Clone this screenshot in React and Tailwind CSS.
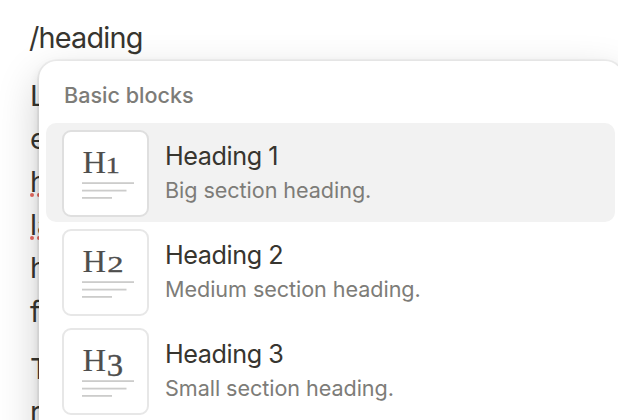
const lines = [
  { text: "L" },
  { text: "e" },
  { text: "h", misspelled: true },
  { text: "la", misspelled: true },
  { text: "h" },
  { text: "f" },
];

const blocks = [
  { level: "1", title: "Heading 1", description: "Big section heading." },
  { level: "2", title: "Heading 2", description: "Medium section heading." },
  { level: "3", title: "Heading 3", description: "Small section heading." },
];

// Old-style digits: 1 and 2 sit at x-height, 3 drops below the baseline
const digitTransforms = {
  1: "translate(41.6 41.2) scale(1.2 1)",
  2: "translate(43.3 41.2) scale(1.36 1)",
  3: "translate(42.8 46) scale(1.36 1.32)",
};

const HeadingIcon = ({ level }) => (
  <svg width="83" height="83" viewBox="0 0 83 83" aria-hidden="true">
    <g
      fill="#454544"
      stroke="#454544"
      className="font-['Liberation_Serif',serif] opacity-95"
    >
      <text
        transform="translate(18.4 41.2) scale(1.02 1)"
        fontSize="32"
        strokeWidth="0.1"
      >
        H
      </text>
      <text
        transform={digitTransforms[level]}
        fontSize="24"
        strokeWidth="0.3"
      >
        {level}
      </text>
    </g>
    <g fill="#cccccb">
      <rect x="18" y="50.2" width="52" height="1.8" />
      <rect x="18" y="57.7" width="44.5" height="1.8" />
      <rect x="18" y="65" width="30" height="1.8" />
    </g>
  </svg>
);

const BlockItem = ({ block, active }) => (
  <div
    className={`flex h-[99px] items-center rounded-[10px] pt-px pl-4 ${
      active ? "bg-[#f2f2f2]" : ""
    }`}
  >
    <div
      className={`flex size-[87px] shrink-0 items-center justify-center rounded-[9px] border-2 bg-white ${
        active ? "border-[#dfdfdf]" : "border-[#e7e7e7]"
      }`}
    >
      <HeadingIcon level={block.level} />
    </div>
    <div className="ml-4 whitespace-nowrap">
      <div className="text-[25.2px] leading-[34px] tracking-[-0.42px] text-[#37352f]">
        {block.title}
      </div>
      <div className="text-[21.6px] leading-[34px] tracking-[-0.06px] text-[#7d7c78]">
        {block.description}
      </div>
    </div>
  </div>
);

const Line = ({ text, misspelled }) => (
  <div className="relative h-[43.2px]">
    {text}
    {misspelled && (
      <div className="absolute top-[33px] left-0 flex gap-[2.6px]">
        <span className="size-1 rounded-full bg-[#e8685f]" />
        <span className="size-1 rounded-full bg-[#e8685f]" />
      </div>
    )}
  </div>
);

export default function App() {
  return (
    <div className="relative h-[420px] w-[618px] overflow-hidden bg-white font-[Inter,sans-serif]">
      <div className="pt-4 pl-[30px] text-[28.8px] leading-[43.2px] text-[#37352f]">
        <div className="mb-[14.4px] -ml-px tracking-[-0.8px]">/heading</div>
        <div className="mb-[14.4px]">
          {lines.map((line, index) => (
            <Line key={index} {...line} />
          ))}
        </div>
        <Line text="T" />
        <Line text="r" />
      </div>

      <div className="absolute top-[61px] left-[39px] h-[480px] w-[584px] rounded-[18px] bg-white pt-4 pr-2 pl-[7px] shadow-[0_0_0_1.8px_rgba(15,15,15,0.05),0_5.4px_10.8px_rgba(15,15,15,0.1),0_16.2px_43.2px_rgba(15,15,15,0.2)]">
        <div className="mb-[10px] ml-[18px] h-9 text-[21.6px] leading-9 font-medium text-[#7d7c78]">
          Basic blocks
        </div>
        {blocks.map((block, index) => (
          <BlockItem key={block.level} block={block} active={index === 0} />
        ))}
      </div>
    </div>
  );
}
